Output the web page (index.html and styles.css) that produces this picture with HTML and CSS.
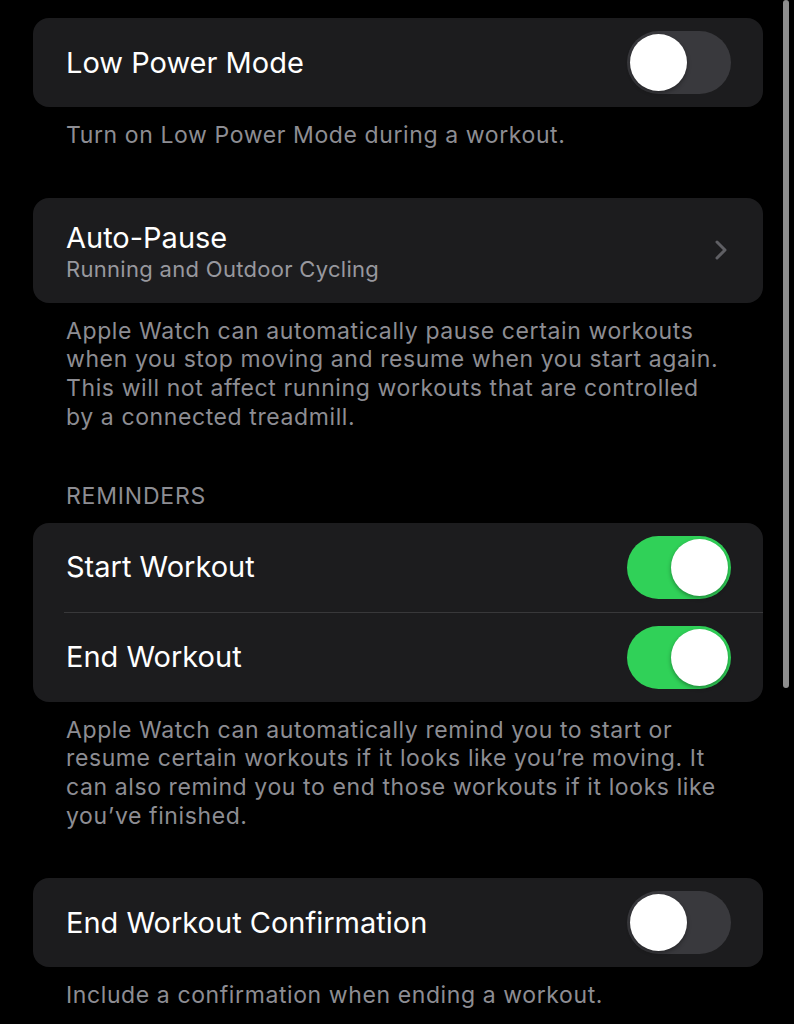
FILE: index.html
```html
<!DOCTYPE html>
<html>
<head>
<meta charset="utf-8">
<link rel="stylesheet" href="styles.css">
</head>
<body>
<div class="page">
  <div class="card">
    <div class="row">
      <span class="title">Low Power Mode</span>
      <span class="toggle"><span class="knob"></span></span>
    </div>
  </div>
  <p class="footer">Turn on Low Power Mode during a workout.</p>

  <div class="card">
    <div class="row row-tall">
      <div class="stack">
        <span class="title">Auto-Pause</span>
        <span class="subtitle">Running and Outdoor Cycling</span>
      </div>
      <svg class="chevron" width="14" height="22" viewBox="0 0 14 22"><path d="M3 3 L11 11 L3 19" fill="none" stroke="#5f5f64" stroke-width="3" stroke-linecap="round" stroke-linejoin="round"/></svg>
    </div>
  </div>
  <p class="footer">Apple Watch can automatically pause certain workouts when you stop moving and resume when you start again. This will not affect running workouts that are controlled by a connected treadmill.</p>

  <p class="header">REMINDERS</p>
  <div class="card">
    <div class="row">
      <span class="title">Start Workout</span>
      <span class="toggle on"><span class="knob"></span></span>
    </div>
    <div class="sep"></div>
    <div class="row">
      <span class="title">End Workout</span>
      <span class="toggle on"><span class="knob"></span></span>
    </div>
  </div>
  <p class="footer">Apple Watch can automatically remind you to start or resume certain workouts if it looks like you’re moving. It can also remind you to end those workouts if it looks like you’ve finished.</p>

  <div class="card">
    <div class="row">
      <span class="title">End Workout Confirmation</span>
      <span class="toggle"><span class="knob"></span></span>
    </div>
  </div>
  <p class="footer">Include a confirmation when ending a workout.</p>
</div>
<div class="scrollbar"></div>
</body>
</html>
```
FILE: styles.css
```css
html, body {
  margin: 0;
  padding: 0;
  background: #000;
}
body {
  font-family: Inter, "Noto Sans", sans-serif;
  color: #fff;
  width: 794px;
  height: 1024px;
  overflow: hidden;
  position: relative;
}
.page {
  padding: 18px 31px 0 33px;
}
.card {
  background: #1c1c1e;
  border-radius: 16px;
  overflow: hidden;
}
.row {
  height: 89px;
  display: flex;
  align-items: center;
  justify-content: space-between;
  padding: 0 32px 0 33px;
}
.row-tall {
  height: 105px;
  padding-right: 35px;
}
.stack {
  display: flex;
  flex-direction: column;
  padding-top: 4px;
}
.title {
  font-size: 29px;
  line-height: 34px;
}
.subtitle {
  font-size: 22px;
  line-height: 28px;
  color: #98989e;
  letter-spacing: 0.3px;
}
.chevron {
  display: block;
}
.sep {
  height: 1px;
  background: #38383a;
  margin-left: 31px;
}
.toggle {
  width: 104px;
  height: 63px;
  border-radius: 32px;
  background: #39393d;
  position: relative;
  flex: none;
}
.toggle.on {
  background: #30d158;
}
.knob {
  position: absolute;
  top: 3px;
  left: 3px;
  width: 57px;
  height: 57px;
  border-radius: 50%;
  background: #fff;
  box-shadow: 0 2px 4px rgba(0,0,0,0.35);
}
.toggle.on .knob {
  left: 44px;
}
.footer {
  margin: 0 0 48px 0;
  padding: 14px 35px 0 33px;
  font-size: 23px;
  line-height: 28.7px;
  color: #8d8d93;
  letter-spacing: 0.6px;
}
.header {
  margin: 50px 0 12px 0;
  padding: 0 0 0 33px;
  font-size: 23px;
  line-height: 29px;
  color: #8d8d93;
  letter-spacing: 0.8px;
}
.scrollbar {
  position: absolute;
  left: 783px;
  top: 0;
  width: 6px;
  height: 688px;
  border-radius: 3px;
  background: #8e8e8e;
}
```
